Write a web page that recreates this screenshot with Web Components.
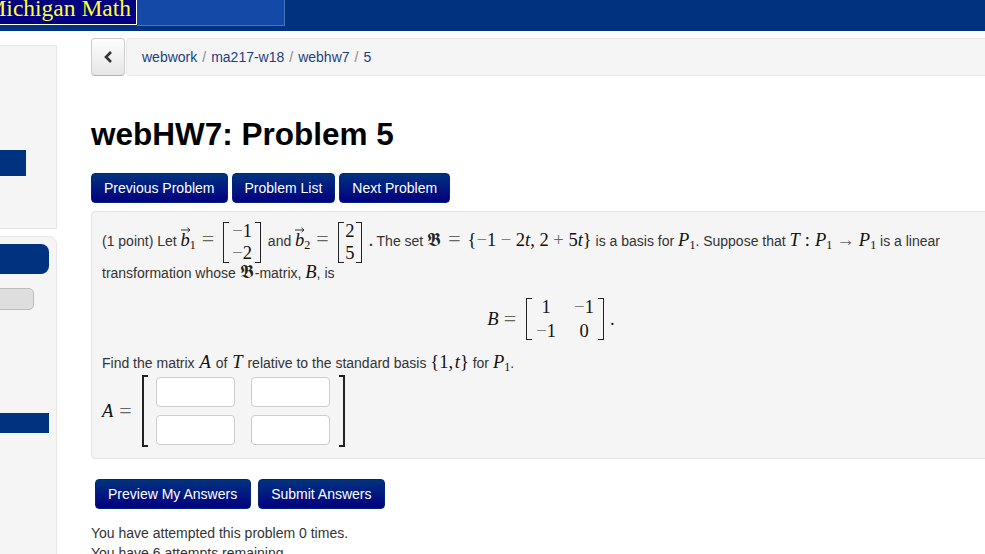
<!DOCTYPE html>
<html>
<head>
<meta charset="utf-8">
<title>webHW7: Problem 5</title>
<style>
html, body { margin: 0; padding: 0; height: 554px; overflow: hidden; background: #fff; }
body { font: 14px/20px "Liberation Sans", Arial, sans-serif; color: #333; }
</style>
</head>
<body>
<wb-navbar></wb-navbar>
<wb-layout></wb-layout>

<script>
// navbar with the course name cut off on the left
class WbNavbar extends HTMLElement {
  constructor() {
    super();
    this.attachShadow({ mode: 'open' });
    this.shadowRoot.innerHTML = `
    <style>
    :host { display: flex; height: 31px; background: #00337f; overflow: hidden; align-items: flex-start; }
    .brand {
      flex: none; box-sizing: border-box; width: 138px; height: 25px; margin-left: -1px;
      background: #000080; border: 1px solid #fff; border-top: 0;
      color: #ffff33; font: 23.5px/16px "Liberation Serif", serif; white-space: nowrap; overflow: hidden;
      display: flex; justify-content: flex-end; padding-right: 5px;
    }
    .fill { flex: none; box-sizing: border-box; width: 148px; height: 26px; background: #1449a8; border: 1px solid #4a74b8; border-width: 0 1px 1px 0; }
    </style>
    <div class="brand">Michigan Math</div>
    <div class="fill"></div>`;
  }
}
customElements.define('wb-navbar', WbNavbar);

class WbSidebar extends HTMLElement {
  constructor() {
    super();
    this.attachShadow({ mode: 'open' });
    this.shadowRoot.innerHTML = `
    <style>
    :host { display: flex; flex-direction: column; gap: 7px; flex: none; width: 57px; overflow: hidden; padding-top: 14px; }
    .panel { box-sizing: border-box; margin-left: -20px; background: #f5f5f5; border: 1px solid #e6e6e6; display: flex; flex-direction: column; }
    .one { height: 184px; padding-top: 104px; }
    .two { height: 340px; padding: 7px 7px 0 0; border-radius: 8px 8px 0 0; }
    .blue { background: #00337f; }
    .b1 { height: 26px; margin-right: 30px; }
    .b2 { height: 30px; border-radius: 8px; }
    .grey { box-sizing: border-box; height: 22px; margin: 14px 15px 0 0; background: #dedede; border: 1px solid #bdbdbd; border-radius: 5px; }
    .b3 { height: 20px; margin-top: 103px; }
    </style>
    <div class="panel one"><div class="blue b1"></div></div>
    <div class="panel two">
      <div class="blue b2"></div>
      <div class="grey"></div>
      <div class="blue b3"></div>
    </div>`;
  }
}
customElements.define('wb-sidebar', WbSidebar);

class WbBreadcrumb extends HTMLElement {
  constructor() {
    super();
    this.attachShadow({ mode: 'open' });
    this.shadowRoot.innerHTML = `
    <style>
    :host { display: flex; height: 38px; gap: 1px; }
    .back {
      flex: none; box-sizing: border-box; width: 34px; display: flex; align-items: center; justify-content: center;
      background: linear-gradient(#fdfdfd, #e6e6e6); border: 1px solid #ccc; border-bottom-color: #b3b3b3; border-radius: 4px;
    }
    .trail {
      flex: 1; box-sizing: border-box; display: flex; align-items: center; padding-left: 15px; gap: 5px;
      background: #f5f5f5; border: 1px solid #e8e8e8; border-radius: 4px; color: #1c3f80; white-space: nowrap;
    }
    .sep { color: #888; }
    </style>
    <div class="back">
      <svg width="9" height="12" viewBox="0 0 9 12"><path d="M7 1 L2 6 L7 11" fill="none" stroke="#333" stroke-width="2.6"/></svg>
    </div>
    <div class="trail">
      <span>webwork</span><span class="sep">/</span><span>ma217-w18</span><span class="sep">/</span><span>webhw7</span><span class="sep">/</span><span>5</span>
    </div>`;
  }
}
customElements.define('wb-breadcrumb', WbBreadcrumb);

class WbButton extends HTMLElement {
  constructor() {
    super();
    this.attachShadow({ mode: 'open' });
    this.shadowRoot.innerHTML = `
    <style>
    :host {
      display: inline-block; box-sizing: border-box; height: 30px; padding: 4px 12px; flex: none;
      background: linear-gradient(#00337f, #000080); border: 1px solid #00267a; border-radius: 4px;
      color: #fff; font: 14px/20px "Liberation Sans", Arial, sans-serif; white-space: nowrap;
    }
    </style>
    <slot></slot>`;
  }
}
customElements.define('wb-button', WbButton);

// matrix with drawn brackets, cells come in through the slot
class WbMatrix extends HTMLElement {
  constructor() {
    super();
    this.attachShadow({ mode: 'open' });
    this.shadowRoot.innerHTML = `
    <style>
    :host { display: inline-flex; vertical-align: middle; align-items: stretch; }
    .br { flex: none; box-sizing: border-box; width: 6px; border: solid #222; border-width: var(--br-w, 1.5px) var(--br-w, 1.5px); }
    .l { border-right: 0; }
    .r { border-left: 0; }
    .cells { display: grid; grid-template-columns: var(--cols, auto); justify-items: center; align-items: center; align-content: center;
      column-gap: var(--col-gap, 0); row-gap: var(--row-gap, 3px); padding: var(--cell-pad, 0 4px); }
    </style>
    <span class="br l"></span>
    <div class="cells"><slot></slot></div>
    <span class="br r"></span>`;
  }
}
customElements.define('wb-matrix', WbMatrix);

class WbProblem extends HTMLElement {
  constructor() {
    super();
    this.attachShadow({ mode: 'open' });
    const vec = n => `<span class="m"><span class="vec"><i>b</i><svg width="10" height="6" viewBox="0 0 10 6"><path d="M0 3H9M6.5 .8L9 3L6.5 5.2" fill="none" stroke="#222" stroke-width=".9"/></svg></span><sub>${n}</sub></span>`;
    const P1 = `<span class="m"><i>P</i><sub>1</sub></span>`;
    const FB = `<span class="frak">𝕭</span>`;
    const eq = (a, b) => `<span class="m eq" style="margin:0 ${b}px 0 ${a}px">=</span>`;
    const op = s => `<span class="op">${s}</span>`;
    this.shadowRoot.innerHTML = `
    <style>
    :host {
      display: block; box-sizing: border-box; height: 248px; padding: 8px 10px 0;
      background: #f5f5f5; border: 1px solid #e3e3e3; border-radius: 4px; color: #333;
      font: 14px/20px "Liberation Sans", Arial, sans-serif;
    }
    .m, .frak { font: 18.5px/20px "Liberation Serif", serif; color: #111; white-space: nowrap; }
    .frak { font-family: "DejaVu Sans", "Noto Sans", serif; font-size: 19px; line-height: 0; color: #222; margin-right: 1px; }
    i { font-style: italic; }
    sub { font-size: 12px; line-height: 0; vertical-align: -3px; }
    .vec { position: relative; display: inline-block; }
    .vec svg { position: absolute; left: 0; top: -3px; }
    .m.eq { font-size: 22px; line-height: 0; color: #666; }
    .op { color: #666; }
    .first { display: block; height: 42px; line-height: 42px; white-space: nowrap; }
    .first wb-matrix { height: 41px; --row-gap: 4px; }
    .first wb-matrix .m { line-height: 18px; }
    .line2 { display: block; line-height: 20px; }
    .center { display: flex; justify-content: center; align-items: center; height: 42px; margin: 15px 0 12px; }
    .find { display: block; line-height: 20px; }
    .find .m.v { margin: 0 1px; }
    .find .m.tight { word-spacing: -3px; }
    .answer { display: flex; align-items: center; margin-top: 2px; }
    .answer wb-matrix { height: 72px; --br-w: 2px; --cols: 79px 79px; --col-gap: 16px; --row-gap: 8px; --cell-pad: 0 9px 0 8px; }
    .field { box-sizing: border-box; width: 79px; height: 30px; background: #fff; border: 1px solid #ccc; border-radius: 4px; display: block; }
    .big { --cols: 24px 24px; --col-gap: 14px; --row-gap: 4px; --cell-pad: 0 2px; height: 42px; }
    .gapl { margin-left: 3px; }
    </style>
    <span class="first">(1 point) Let ${vec(1)}${eq(6, 9)}<wb-matrix style="--cell-pad:0 3px"><span class="m">${op('−')}1</span><span class="m">${op('−')}2</span></wb-matrix><span class="gapl"> and</span> ${vec(2)}${eq(6, 9)}<wb-matrix style="--cell-pad:0 1.5px"><span class="m">2</span><span class="m">5</span></wb-matrix><span style="margin-left:7px;font-weight:700">.</span> The set ${FB}${eq(6, 7)}<span class="m">{${op('−')}1 ${op('−')} 2<i>t</i>, 2 ${op('+')} 5<i>t</i>}</span> is a basis for ${P1}. Suppose that <span class="m"><i>T</i><span style="margin:0 5px">:</span><i>P</i><sub>1</sub><span class="op" style="margin:0 4px">→</span><i>P</i><sub>1</sub></span> is a linear</span>
    <span class="line2">transformation whose ${FB}-matrix, <span class="m"><i>B</i></span>, is</span>
    <div class="center"><span class="m"><i>B</i></span>${eq(5, 10)}<wb-matrix class="big"><span class="m">1</span><span class="m">${op('−')}1</span><span class="m">${op('−')}1</span><span class="m">0</span></wb-matrix><span class="m" style="margin-left:6px">.</span></div>
    <span class="find">Find the matrix <span class="m v"><i>A</i></span> of <span class="m v"><i>T</i></span> relative to the standard basis <span class="m tight">{1, <i>t</i>}</span> for ${P1}.</span>
    <div class="answer"><span class="m"><i>A</i></span>${eq(6, 10)}
      <wb-matrix><span class="field"></span><span class="field"></span><span class="field"></span><span class="field"></span></wb-matrix>
    </div>`;
  }
}
customElements.define('wb-problem', WbProblem);

class WbLayout extends HTMLElement {
  constructor() {
    super();
    this.attachShadow({ mode: 'open' });
    this.shadowRoot.innerHTML = `
    <style>
    :host { display: flex; gap: 34px; }
    main { flex: none; width: 920px; padding-top: 7px; }
    h1 { margin: 38px 0 19px; font: bold 31.5px/40px "Liberation Sans", Arial, sans-serif; color: #000; }
    .row { display: flex; gap: 4px; }
    .row.answers { gap: 7px; margin: 20px 0 14px 4px; }
    .row.answers wb-button:first-child { padding-right: 13px; }
    wb-problem { margin-top: 8px; }
    p { margin: 0; line-height: 20px; }
    </style>
    <wb-sidebar></wb-sidebar>
    <main>
      <wb-breadcrumb></wb-breadcrumb>
      <h1>webHW7: Problem 5</h1>
      <div class="row"><wb-button>Previous Problem</wb-button><wb-button>Problem List</wb-button><wb-button>Next Problem</wb-button></div>
      <wb-problem></wb-problem>
      <div class="row answers"><wb-button>Preview My Answers</wb-button><wb-button>Submit Answers</wb-button></div>
      <p>You have attempted this problem 0 times.</p>
      <p>You have 6 attempts remaining.</p>
    </main>`;
  }
}
customElements.define('wb-layout', WbLayout);
</script>
</body>
</html>
